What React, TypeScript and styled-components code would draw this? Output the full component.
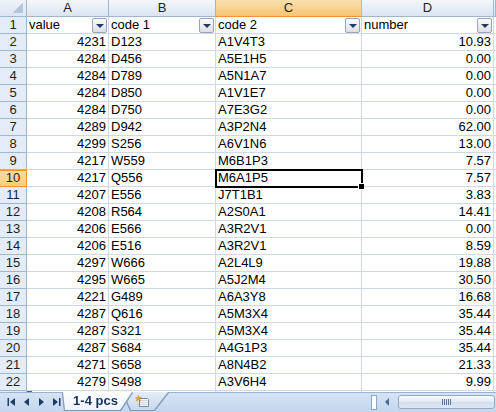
import React from "react";
import styled, { createGlobalStyle, css } from "styled-components";

const GlobalStyle = createGlobalStyle`
  html, body { margin: 0; padding: 0; background: #fff; }
  body {
    width: 496px;
    height: 412px;
    overflow: hidden;
    font-family: "Liberation Sans", Arial, sans-serif;
  }
`;

const COLS = "27px 82px 107px 146px 132px 1fr";
const GRID = "#d0d7e5";
const HEAD_BORDER = "#9eb6ce";
const ACTIVE_BORDER = "#f29436";

const Sheet = styled.div`
  width: 496px;
  height: 412px;
  display: flex;
  flex-direction: column;
  overflow: hidden;
  background: #fff;
`;

const GridArea = styled.div`
  flex: none;
  height: 392px;
  overflow: hidden;
  display: flex;
  flex-direction: column;
`;

const Row = styled.div`
  flex: none;
  display: grid;
  grid-template-columns: ${COLS};
  height: 17px;
`;

const Corner = styled.div`
  box-sizing: border-box;
  border-right: 1px solid ${HEAD_BORDER};
  border-bottom: 1px solid ${HEAD_BORDER};
  background:
    linear-gradient(135deg, transparent 50%, #b3c5db 50%) no-repeat right 3px bottom 3px / 10px 10px,
    linear-gradient(#eef3fa, #dce5f2);
`;

const ColHeader = styled.div<{ $active?: boolean }>`
  box-sizing: border-box;
  border-right: 1px solid ${HEAD_BORDER};
  border-bottom: 1px solid ${HEAD_BORDER};
  background: linear-gradient(#f4f7fc, #dbe4f1);
  color: #1f1f1f;
  font-size: 13px;
  line-height: 16px;
  text-align: center;
  white-space: nowrap;
  overflow: hidden;
  ${(p) =>
    p.$active &&
    css`
      background: linear-gradient(#fbdfae, #f6c675);
      border-bottom-color: ${ACTIVE_BORDER};
      border-right-color: #e9b060;
    `}
`;

const RowHeader = styled.div<{ $active?: boolean }>`
  box-sizing: border-box;
  border-right: 1px solid ${HEAD_BORDER};
  border-bottom: 1px solid ${HEAD_BORDER};
  background: #e4ecf7;
  color: #1f1f1f;
  font-size: 13px;
  line-height: 16px;
  text-align: center;
  ${(p) =>
    p.$active &&
    css`
      background: linear-gradient(#fcdca3, #f8cd80);
      border-right-color: ${ACTIVE_BORDER};
      border-bottom-color: ${ACTIVE_BORDER};
      box-shadow: inset 0 1px 0 ${ACTIVE_BORDER};
    `}
`;

const Cell = styled.div<{ $align?: "left" | "right"; $selected?: boolean; $flag?: boolean }>`
  box-sizing: border-box;
  position: relative;
  border-right: 1px solid ${GRID};
  border-bottom: 1px solid ${GRID};
  padding: 0 2px;
  font-size: 13px;
  line-height: 16px;
  color: #000;
  white-space: nowrap;
  overflow: visible;
  text-align: ${(p) => p.$align ?? "left"};
  ${(p) =>
    p.$flag &&
    css`
      background: linear-gradient(135deg, #1f8a1f 50%, transparent 50%) no-repeat left top / 6px 6px;
    `}
  ${(p) =>
    p.$selected &&
    css`
      z-index: 2;
      outline: 2px solid #000;
      outline-offset: -1px;
      &::after {
        content: "";
        position: absolute;
        right: -4px;
        bottom: -4px;
        width: 5px;
        height: 5px;
        background: #000;
        border: 1px solid #fff;
      }
    `}
`;

const FilterCell = styled.div`
  box-sizing: border-box;
  border-right: 1px solid ${GRID};
  border-bottom: 1px solid ${GRID};
  padding: 0 1px 0 2px;
  font-size: 13px;
  line-height: 16px;
  display: flex;
  align-items: center;
  white-space: nowrap;
  overflow: hidden;
`;

const FilterLabel = styled.span`
  flex: 1;
  min-width: 0;
  overflow: hidden;
`;

const FilterButton = styled.span`
  flex: none;
  box-sizing: border-box;
  width: 15px;
  height: 15px;
  display: flex;
  align-items: center;
  justify-content: center;
  border: 1px solid #9aa6b8;
  border-radius: 2px;
  background: linear-gradient(#fbfbfc, #dcdfe4);
  &::before {
    content: "";
    width: 0;
    height: 0;
    border-left: 4px solid transparent;
    border-right: 4px solid transparent;
    border-top: 4px solid #1f3a66;
    margin-top: 1px;
  }
`;

/* ---------- tab bar ---------- */

const TabBar = styled.div`
  flex: none;
  height: 20px;
  display: flex;
  align-items: flex-start;
  background: linear-gradient(#d7e4f5, #c3d6ee);
  box-shadow: inset 0 1px 0 #9ab2d3;
`;

const NavGroup = styled.div`
  flex: none;
  width: 63px;
  height: 20px;
  display: flex;
  align-items: center;
  padding-left: 6px;
  gap: 4px;
  box-sizing: border-box;
`;

const NavButton = styled.span`
  width: 11px;
  height: 12px;
  display: flex;
  align-items: center;
  justify-content: center;
`;

const TabStrip = styled.div`
  flex: none;
  display: flex;
  height: 19px;
`;

const TabFrame = styled.div<{ $front?: boolean }>`
  position: relative;
  z-index: ${(p) => (p.$front ? 2 : 1)};
  filter: drop-shadow(1px 0 0 #7f9bc2) drop-shadow(-1px 0 0 #7f9bc2) drop-shadow(0 1px 0 #7f9bc2);
`;

const SheetTab = styled.div`
  width: 69px;
  height: 18px;
  box-sizing: border-box;
  padding: 0 14px 0 10px;
  background: linear-gradient(#ffffff, #eef3fa);
  clip-path: polygon(0 0, 100% 0, calc(100% - 12px) 100%, 2px 100%);
  color: #15315c;
  font-weight: bold;
  font-size: 13px;
  line-height: 17px;
  text-align: center;
  white-space: nowrap;
`;

const NewTabFrame = styled(TabFrame)`
  margin-left: -9px;
`;

const NewTab = styled.div`
  width: 45px;
  height: 18px;
  box-sizing: border-box;
  padding-left: 12px;
  display: flex;
  align-items: center;
  background: linear-gradient(#e4ecf7, #c9d9ee);
  clip-path: polygon(0 0, 100% 0, calc(100% - 14px) 100%, 8px 100%);
`;

const Spacer = styled.div`
  flex: 1;
`;

const ScrollArea = styled.div`
  flex: none;
  width: 127px;
  height: 20px;
  display: flex;
  align-items: center;
  gap: 3px;
  padding-left: 2px;
  box-sizing: border-box;
`;

const SplitBox = styled.span`
  flex: none;
  box-sizing: border-box;
  width: 6px;
  height: 15px;
  border: 1px solid #8ea5c5;
  background: linear-gradient(90deg, #fff 0 40%, #9cb1cf 40% 60%, #fff 60%);
`;

const ArrowButton = styled.span`
  flex: none;
  width: 14px;
  height: 15px;
  display: flex;
  align-items: center;
  justify-content: center;
  &::before {
    content: "";
    border-top: 4px solid transparent;
    border-bottom: 4px solid transparent;
    border-right: 4px solid #4d6a93;
  }
`;

const Thumb = styled.span`
  flex: none;
  box-sizing: border-box;
  width: 97px;
  height: 14px;
  margin-left: 1px;
  border: 1px solid #94a9c7;
  border-radius: 3px;
  background: linear-gradient(#f8fafd, #e2e9f3 50%, #d3ddeb 51%, #dfe7f2);
  display: flex;
  align-items: center;
  justify-content: center;
  &::before {
    content: "";
    width: 9px;
    height: 6px;
    background: repeating-linear-gradient(90deg, #5d7392 0 1px, transparent 1px 2px);
  }
`;

/* ---------- data ---------- */

type Rec = [number, string, string, string];

const DATA: Rec[] = [
  [4231, "D123", "A1V4T3", "10.93"],
  [4284, "D456", "A5E1H5", "0.00"],
  [4284, "D789", "A5N1A7", "0.00"],
  [4284, "D850", "A1V1E7", "0.00"],
  [4284, "D750", "A7E3G2", "0.00"],
  [4289, "D942", "A3P2N4", "62.00"],
  [4299, "S256", "A6V1N6", "13.00"],
  [4217, "W559", "M6B1P3", "7.57"],
  [4217, "Q556", "M6A1P5", "7.57"],
  [4207, "E556", "J7T1B1", "3.83"],
  [4208, "R564", "A2S0A1", "14.41"],
  [4206, "E566", "A3R2V1", "0.00"],
  [4206, "E516", "A3R2V1", "8.59"],
  [4297, "W666", "A2L4L9", "19.88"],
  [4295, "W665", "A5J2M4", "30.50"],
  [4221, "G489", "A6A3Y8", "16.68"],
  [4287, "Q616", "A5M3X4", "35.44"],
  [4287, "S321", "A5M3X4", "35.44"],
  [4287, "S684", "A4G1P3", "35.44"],
  [4271, "S658", "A8N4B2", "21.33"],
  [4279, "S498", "A3V6H4", "9.99"],
];

const HEADERS = ["value", "code 1", "code 2", "number"];
const NAVY = "#1e3c66";

const NavIcon: React.FC<{ kind: "first" | "prev" | "next" | "last" }> = ({ kind }) => {
  const flip = kind === "next" || kind === "last";
  const bar = kind === "first" || kind === "last";
  return (
    <svg width="9" height="10" viewBox="0 0 9 10" style={flip ? { transform: "scaleX(-1)" } : undefined}>
      {bar && <rect x="0.5" y="1" width="1.5" height="8" fill={NAVY} />}
      <polygon points={bar ? "8,1 3,5 8,9" : "7,1 2,5 7,9"} fill={NAVY} />
    </svg>
  );
};

const NewSheetIcon = () => (
  <svg width="15" height="13" viewBox="0 0 15 13">
    <path d="M4.5 3.5 H12.5 L13.5 4.5 V11.5 H4.5 Z" fill="#fdfdfd" stroke="#7d8796" strokeWidth="1" />
    <path d="M5.5 5.5 H12.5 M5.5 7.5 H12.5 M5.5 9.5 H12.5" stroke="#c9d1dc" strokeWidth="1" />
    <path d="M3.5 0.5 L4.3 2.5 L6.5 2.5 L4.8 3.8 L5.5 6 L3.5 4.7 L1.5 6 L2.2 3.8 L0.5 2.5 L2.7 2.5 Z" fill="#f5a623" stroke="#e07b00" strokeWidth="0.5" />
  </svg>
);

export default function App() {
  return (
    <>
      <GlobalStyle />
      <Sheet>
        <GridArea>
          <Row>
            <Corner />
            <ColHeader>A</ColHeader>
            <ColHeader>B</ColHeader>
            <ColHeader $active>C</ColHeader>
            <ColHeader>D</ColHeader>
            <ColHeader />
          </Row>
          <Row>
            <RowHeader>1</RowHeader>
            {HEADERS.map((h) => (
              <FilterCell key={h}>
                <FilterLabel>{h}</FilterLabel>
                <FilterButton />
              </FilterCell>
            ))}
            <Cell />
          </Row>
          {DATA.map((r, i) => {
            const n = i + 2;
            const active = n === 10;
            return (
              <Row key={n}>
                <RowHeader $active={active}>{n}</RowHeader>
                <Cell $align="right">{r[0]}</Cell>
                <Cell>{r[1]}</Cell>
                <Cell $selected={active}>{r[2]}</Cell>
                <Cell $align="right">{r[3]}</Cell>
                <Cell />
              </Row>
            );
          })}
          <Row>
            <RowHeader />
            <Cell $flag />
            <Cell />
            <Cell />
            <Cell />
            <Cell />
          </Row>
        </GridArea>
        <TabBar>
          <NavGroup>
            <NavButton><NavIcon kind="first" /></NavButton>
            <NavButton><NavIcon kind="prev" /></NavButton>
            <NavButton><NavIcon kind="next" /></NavButton>
            <NavButton><NavIcon kind="last" /></NavButton>
          </NavGroup>
          <TabStrip>
            <TabFrame $front>
              <SheetTab>1-4 pcs</SheetTab>
            </TabFrame>
            <NewTabFrame>
              <NewTab>
                <NewSheetIcon />
              </NewTab>
            </NewTabFrame>
          </TabStrip>
          <Spacer />
          <ScrollArea>
            <SplitBox />
            <ArrowButton />
            <Thumb />
          </ScrollArea>
        </TabBar>
      </Sheet>
    </>
  );
}
